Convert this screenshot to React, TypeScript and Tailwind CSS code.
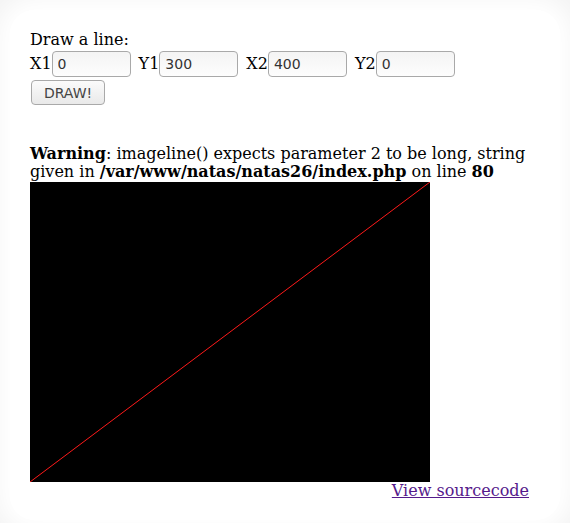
import { useState } from 'react';

const serif = { fontFamily: '"DejaVu Serif", "Liberation Serif", serif' };

const Field = ({ label, value, first }: { label: string; value: string; first?: boolean }) => (
  <div className={`flex items-center ${first ? '' : 'ml-[8px]'}`}>
    <span>{label}</span>
    <input
      defaultValue={value}
      className="w-[79px] h-[26px] rounded-[4px] border border-[#a9a9a9] bg-gradient-to-b from-[#f4f4f4] to-[#fdfdfd] px-[5px] text-[14px] text-[#333] font-['DejaVu_Sans',sans-serif] outline-none"
    />
  </div>
);

const App = () => {
  const [coords] = useState({ x1: 0, y1: 300, x2: 400, y2: 0 });

  return (
    <div className="min-h-[523px] bg-[#f3f3f3] p-[10px] overflow-hidden" style={serif}>
      <div className="bg-white rounded-[24px] shadow-[0_0_24px_14px_#ffffff] px-[20px] pt-[21px] pb-[20px] text-[16px] leading-[18px] text-black">
        <div className="w-[499px]">
          <div>Draw a line:</div>
          <div className="flex items-center mt-[2px] h-[26px]">
            <Field label="X1" value="0" first />
            <Field label="Y1" value="300" />
            <Field label="X2" value="400" />
            <Field label="Y2" value="0" />
          </div>
          <button className="mt-[3px] ml-[1px] w-[74px] h-[25px] rounded-[4px] border border-[#a9a9a9] bg-gradient-to-b from-[#fbfbfb] to-[#e9e9e9] text-[14px] text-[#444] font-['DejaVu_Sans',sans-serif]">
            DRAW!
          </button>

          <p className="mt-[40px]">
            <b>Warning</b>: imageline() expects parameter 2 to be long, string given in{' '}
            <b>/var/www/natas/natas26/index.php</b> on line <b>80</b>
          </p>

          {/* generated image */}
          <svg width="400" height="300" viewBox="0 0 400 300" className="block mt-[1px]">
            <rect width="400" height="300" fill="#000" />
            <line x1={coords.x1} y1={coords.y1} x2={coords.x2} y2={coords.y2} stroke="#ff1a1a" strokeWidth="1" />
          </svg>

          <div className="text-right">
            <a href="#" className="text-[#551a8b] underline">
              View sourcecode
            </a>
          </div>
        </div>
      </div>
    </div>
  );
};

export default App;
